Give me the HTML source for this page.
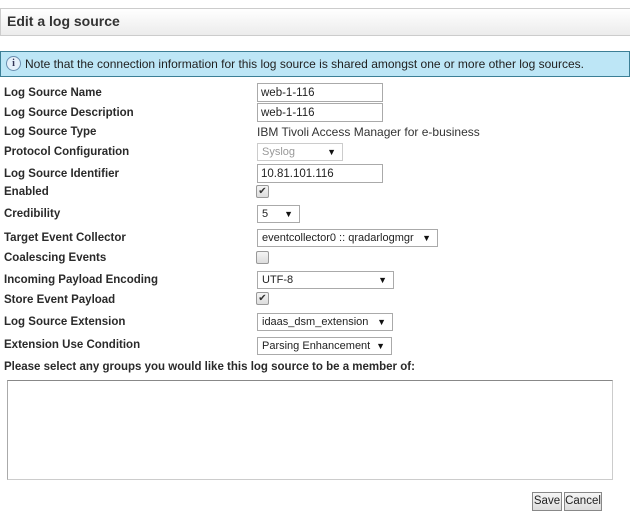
<!DOCTYPE html><html><head><style>
body{margin:0;width:630px;height:526px;background:#fff;position:relative;font-family:"Liberation Sans",Arial,sans-serif;overflow:hidden}
.a{position:absolute}
.l{position:absolute;left:4px;font-size:11.5px;font-weight:bold;color:#2a2a2a;line-height:14px}
.in{position:absolute;left:257px;border:1px solid #aaa;height:17px;font-size:11.5px;color:#222;line-height:19px;padding-left:3px;box-sizing:content-box;background:#fff}
.sel{position:absolute;left:257px;border:1px solid #aaa;height:16px;font-size:11px;color:#222;line-height:16px;padding-left:4px;padding-right:16px;box-sizing:border-box;background:#fff;white-space:nowrap;overflow:hidden}
.sel:after{content:"▼";position:absolute;right:6px;top:0;font-size:9px;color:#111}
.cb{position:absolute;left:256px;width:11px;height:11px;border:1px solid #999;background:linear-gradient(#f4f4f4,#ddd);border-radius:2px;font-size:10px;line-height:11px;text-align:center;color:#333}
.btn{position:absolute;top:492px;height:17px;border:1px solid #888;background:linear-gradient(#f6f6f6,#ddd);font-size:11.5px;line-height:17px;text-align:center;color:#222}
</style></head><body>
<div class="a" style="left:0;top:8px;width:629px;height:26px;border:1px solid #ccc;border-right:none;background:linear-gradient(#fff,#ececec)"></div>
<div class="a" style="left:7px;top:13px;font-size:14px;font-weight:bold;color:#333">Edit a log source</div>
<div class="a" style="left:0;top:51px;width:628px;height:24px;border:1px solid #3c7f96;background:#bde6f6"></div>
<div class="a" style="left:6px;top:56px;width:13px;height:13px;border-radius:50%;border:1px solid #6a8fb0;background:#e6f0fa;font-size:10px;line-height:13px;text-align:center;color:#335;font-family:'Liberation Serif',serif;font-weight:bold">i</div>
<div class="a" style="left:25px;top:57px;font-size:12px;color:#222">Note that the connection information for this log source is shared amongst one or more other log sources.</div>

<div class="l" style="top:86px">Log Source Name</div>
<div class="l" style="top:106px">Log Source Description</div>
<div class="l" style="top:125px">Log Source Type</div>
<div class="l" style="top:145px">Protocol Configuration</div>
<div class="l" style="top:167px">Log Source Identifier</div>
<div class="l" style="top:185px">Enabled</div>
<div class="l" style="top:207px">Credibility</div>
<div class="l" style="top:231px">Target Event Collector</div>
<div class="l" style="top:251px">Coalescing Events</div>
<div class="l" style="top:273px">Incoming Payload Encoding</div>
<div class="l" style="top:293px">Store Event Payload</div>
<div class="l" style="top:315px">Log Source Extension</div>
<div class="l" style="top:338px">Extension Use Condition</div>
<div class="l" style="top:360px">Please select any groups you would like this log source to be a member of:</div>

<div class="in" style="top:83px;width:121px">web-1-116</div>
<div class="in" style="top:103px;width:121px">web-1-116</div>
<div class="a" style="left:257px;top:125px;font-size:12px;color:#333">IBM Tivoli Access Manager for e-business</div>
<div class="sel" style="top:143px;width:86px;height:18px;line-height:16px;color:#999;border-color:#ccc">Syslog</div>
<div class="in" style="top:164px;width:121px">10.81.101.116</div>
<div class="cb" style="top:185px">✔</div>
<div class="sel" style="top:205px;width:43px;height:18px">5</div>
<div class="sel" style="top:229px;width:181px;height:18px">eventcollector0 :: qradarlogmgr</div>
<div class="cb" style="top:251px"></div>
<div class="sel" style="top:271px;width:137px;height:18px">UTF-8</div>
<div class="cb" style="top:292px">✔</div>
<div class="sel" style="top:313px;width:136px;height:18px">idaas_dsm_extension</div>
<div class="sel" style="top:337px;width:135px;height:18px">Parsing Enhancement</div>
<div class="a" style="left:7px;top:380px;width:604px;height:98px;border:1px solid #aaa;border-top-color:#888;border-right-color:#ccc;border-bottom-color:#ccc"></div>
<div class="btn" style="left:532px;width:28px">Save</div>
<div class="btn" style="left:564px;width:36px">Cancel</div>
</body></html>
